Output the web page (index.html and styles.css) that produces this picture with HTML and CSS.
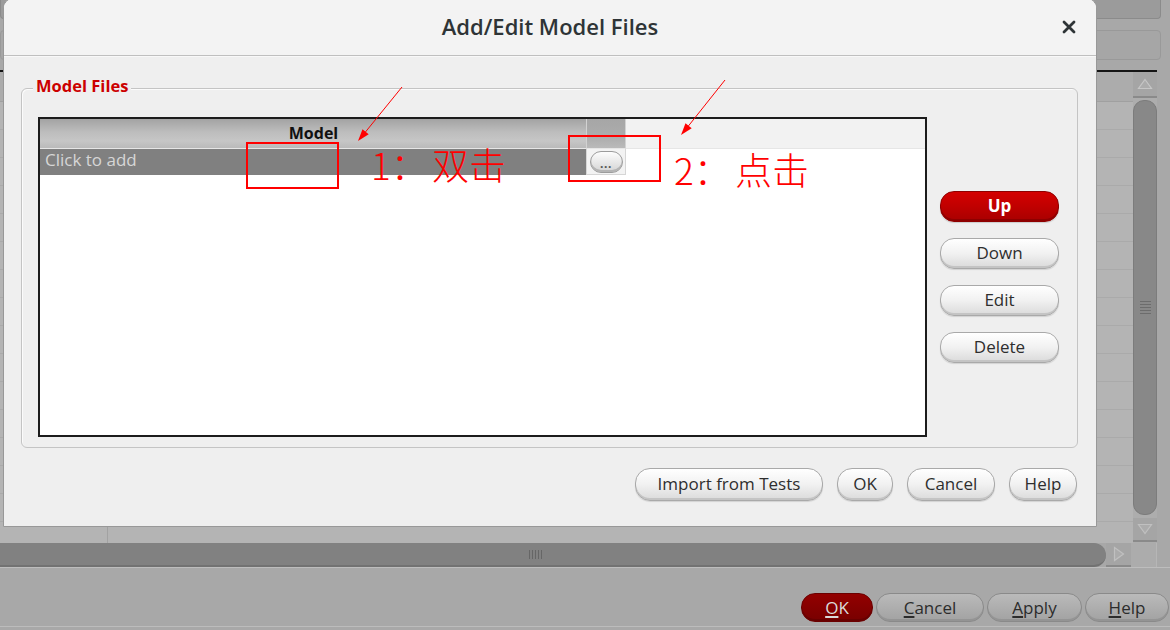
FILE: index.html
```html
<!DOCTYPE html>
<html lang="zh-CN">
<head>
<meta charset="utf-8">
<title>Add/Edit Model Files</title>
<link rel="stylesheet" href="styles.css">
</head>
<body>
<div class="app">
  <div class="app-top">
    <div class="tool-box tool-box-a"></div>
    <div class="tool-box tool-box-b"></div>
  </div>
  <div class="app-body">
    <div class="pane">
      <div class="pane-row pane-head"><div class="pane-cell first"></div><div class="pane-cell"></div></div>
      <div class="pane-row"><div class="pane-cell first"></div><div class="pane-cell"></div></div>
      <div class="pane-row"><div class="pane-cell first"></div><div class="pane-cell"></div></div>
      <div class="pane-row"><div class="pane-cell first"></div><div class="pane-cell"></div></div>
      <div class="pane-row"><div class="pane-cell first"></div><div class="pane-cell"></div></div>
      <div class="pane-row"><div class="pane-cell first"></div><div class="pane-cell"></div></div>
      <div class="pane-row"><div class="pane-cell first"></div><div class="pane-cell"></div></div>
      <div class="pane-row"><div class="pane-cell first"></div><div class="pane-cell"></div></div>
      <div class="pane-row"><div class="pane-cell first"></div><div class="pane-cell"></div></div>
      <div class="pane-row"><div class="pane-cell first"></div><div class="pane-cell"></div></div>
      <div class="pane-row"><div class="pane-cell first"></div><div class="pane-cell"></div></div>
      <div class="pane-row"><div class="pane-cell first"></div><div class="pane-cell"></div></div>
      <div class="pane-row"><div class="pane-cell first"></div><div class="pane-cell"></div></div>
      <div class="pane-row"><div class="pane-cell first"></div><div class="pane-cell"></div></div>
      <div class="pane-row"><div class="pane-cell first"></div><div class="pane-cell"></div></div>
      <div class="pane-row"><div class="pane-cell first"></div><div class="pane-cell"></div></div>
      <div class="pane-row"><div class="pane-cell first"></div><div class="pane-cell"></div></div>
    </div>
    <div class="vscroll">
      <div class="sb-btn sb-up">
        <svg width="16" height="12" viewBox="0 0 16 12"><polygon points="8,1.5 14.5,10.5 1.5,10.5" fill="#acacac" stroke="#c6c6c6" stroke-width="1.2"/></svg>
      </div>
      <div class="sb-track">
        <div class="vthumb"><span class="grip-v"></span></div>
      </div>
      <div class="sb-btn sb-down">
        <svg width="16" height="12" viewBox="0 0 16 12"><polygon points="1.5,1.5 14.5,1.5 8,10.5" fill="#acacac" stroke="#c0c0c0" stroke-width="1.2"/></svg>
      </div>
    </div>
    <div class="edge"></div>
  </div>
  <div class="hscroll-row">
    <div class="hthumb"><span class="grip-h"></span></div>
    <div class="sb-btn sb-right">
      <svg width="12" height="16" viewBox="0 0 12 16"><polygon points="1.5,1.5 10.5,8 1.5,14.5" fill="#acacac" stroke="#c0c0c0" stroke-width="1.2"/></svg>
    </div>
    <div class="corner"></div>
    <div class="edge"></div>
  </div>
  <div class="app-footer">
    <button class="fbtn fbtn-primary fbtn-ok"><u>O</u>K</button>
    <button class="fbtn fbtn-cancel"><u>C</u>ancel</button>
    <button class="fbtn fbtn-apply"><u>A</u>pply</button>
    <button class="fbtn fbtn-help"><u>H</u>elp</button>
  </div>
</div>

<div class="dialog">
  <div class="dlg-title">
    <span></span>
    <span class="dlg-title-text">Add/Edit Model Files</span>
    <span class="dlg-close">
      <svg width="14" height="14" viewBox="0 0 14 14"><path d="M2 2 L12 12 M12 2 L2 12" stroke="#2e3436" stroke-width="2.8" stroke-linecap="round"/></svg>
    </span>
  </div>
  <div class="dlg-body">
    <div class="group">
      <span class="group-legend">Model Files</span>
      <div class="mtable">
        <div class="mt-head mt-head-main">Model</div>
        <div class="mt-head mt-head-small"></div>
        <div class="mt-head mt-head-rest"></div>
        <div class="mt-cell mt-cell-main">Click to add</div>
        <div class="mt-cell mt-cell-small"><span class="ell-btn">...</span></div>
        <div class="mt-cell mt-cell-rest"></div>
        <div class="mt-fill"></div>
      </div>
      <div class="side-btns">
        <button class="pbtn pbtn-red">Up</button>
        <button class="pbtn">Down</button>
        <button class="pbtn">Edit</button>
        <button class="pbtn">Delete</button>
      </div>
    </div>
    <div class="dlg-footer">
      <button class="pbtn dbtn dbtn-import">Import from Tests</button>
      <button class="pbtn dbtn dbtn-ok">OK</button>
      <button class="pbtn dbtn dbtn-cancel">Cancel</button>
      <button class="pbtn dbtn dbtn-help">Help</button>
    </div>
  </div>
</div>

<svg class="annot-svg" width="1170" height="630" viewBox="0 0 1170 630">
  <g fill="none" stroke="#ff0000" stroke-width="2">
    <rect x="247" y="143" width="91" height="45"/>
    <rect x="569" y="136" width="91" height="45"/>
  </g>
  <g stroke="#ff0000" stroke-width="1">
    <line x1="402" y1="87" x2="363" y2="135"/>
    <line x1="725" y1="80" x2="686" y2="129"/>
  </g>
  <g fill="#ff0000">
    <polygon points="358,141 368.7,134.2 362.5,129.2"/>
    <polygon points="681,135 691.7,128.2 685.5,123.2"/>
  </g>
</svg>
<span class="annot-text annot-1">1： 双击</span>
<span class="annot-text annot-2">2： 点击</span>
</body>
</html>
```

FILE: styles.css
```css
* { box-sizing: border-box; }

html, body { margin: 0; padding: 0; }

body {
  width: 1170px;
  height: 630px;
  overflow: hidden;
  position: relative;
  background: #a8a8a8;
  font-family: "Open Sans", "Noto Sans", "Liberation Sans", sans-serif;
}

button { font-family: inherit; cursor: default; }

/* ---------- background application ---------- */
.app {
  width: 1170px;
  height: 630px;
  display: flex;
  flex-direction: column;
}

.app-top {
  height: 70px;
  display: flex;
  flex-direction: column;
  padding-right: 9px;
}

.tool-box { width: 100%; }

.tool-box-a {
  height: 19px;
  background: #9b9b9b;
  border: 1px solid #8b8b8b;
  border-top: none;
  border-radius: 0 0 4px 4px;
}

.tool-box-b {
  margin-top: 11px;
  height: 30px;
  background: #a6a6a6;
  border: 1px solid #999;
  border-radius: 4px;
}

.app-body {
  height: 473px;
  display: flex;
}

.pane {
  flex: 1;
  border-top: 2px solid #151515;
  background: #b4b4b4;
  display: flex;
  flex-direction: column;
  overflow: hidden;
}

.pane-row {
  flex: none;
  height: 28px;
  display: flex;
  border-bottom: 1px solid #aaaaaa;
}

.pane-head {
  height: 30px;
  background: #acacac;
  border-bottom: 1px solid #a0a0a0;
}

.pane-cell { flex: 1; }
.pane-cell.first { flex: none; width: 108px; border-right: 1px solid #a2a2a2; }

.vscroll {
  width: 24px;
  border-top: 2px solid #151515;
  background: #adadad;
  display: flex;
  flex-direction: column;
}

.sb-btn {
  display: flex;
  align-items: center;
  justify-content: center;
  background: #a5a5a5;
}

.sb-up { height: 26px; border-bottom: 2px solid #8a8a8a; }
.sb-down { height: 24px; border-bottom: 2px solid #8a8a8a; margin-bottom: 1px; }

.sb-track {
  flex: 1;
  display: flex;
  padding: 2px 0 3px;
}

.vthumb {
  flex: 1;
  background: #888888;
  border: 1px solid #7c7c7c;
  border-radius: 11px;
  display: flex;
  align-items: center;
  justify-content: center;
}

.grip-v {
  width: 11px;
  height: 13px;
  background: repeating-linear-gradient(to bottom, #6c6c6c 0 1px, transparent 1px 3px);
}

.edge { width: 13px; }

.hscroll-row {
  height: 24px;
  display: flex;
}

.hthumb {
  flex: 1;
  background: #818181;
  border-bottom: 2px solid #727272;
  border-radius: 0 12px 12px 0;
  display: flex;
  align-items: center;
  padding-left: 529px;
}

.grip-h {
  width: 13px;
  height: 9px;
  background: repeating-linear-gradient(to right, #666 0 1px, transparent 1px 3px);
}

.sb-right { width: 25px; border-bottom: 2px solid #8a8a8a; }

.corner {
  width: 26px;
  background: #acacac;
  border-right: 1px solid #b6b6b6;
}

.app-footer {
  flex: 1;
  border-top: 1px solid #bdbdbd;
  border-bottom: 1px solid #bcbcbc;
  margin-bottom: 3px;
  display: flex;
  justify-content: flex-end;
  align-items: flex-start;
  padding: 25px 1px 0 0;
  gap: 3px;
}

.fbtn {
  height: 29px;
  border-radius: 14px;
  border: 1px solid #8a8a8a;
  background: linear-gradient(to bottom, #bababa, #a2a2a2);
  color: #2c2c2c;
  font-size: 17px;
  padding: 0;
  box-shadow: inset 0 -2px 0 #949494;
}

.fbtn u { text-decoration-thickness: 2px; text-underline-offset: 2px; }

.fbtn-primary {
  background: linear-gradient(to bottom, #930000, #780000);
  border-color: #6b0000;
  color: #dadada;
  box-shadow: inset 0 -2px 0 #680000;
}

.fbtn-ok { width: 72px; }
.fbtn-cancel { width: 108px; }
.fbtn-apply { width: 95px; }
.fbtn-help { width: 84px; }

/* ---------- dialog ---------- */
.dialog {
  position: absolute;
  left: 3px;
  top: -2px;
  width: 1094px;
  height: 529px;
  background: #efefef;
  border: 1px solid #989898;
  border-radius: 10px 10px 0 0;
  display: flex;
  flex-direction: column;
}

.dlg-title {
  height: 57px;
  flex: none;
  background: #f3f3f3;
  border-radius: 9px 9px 0 0;
  border-bottom: 1px solid #bfbfbf;
  box-shadow: 0 1px 0 #f8f8f8;
  display: grid;
  grid-template-columns: 1fr auto 1fr;
  align-items: center;
}

.dlg-title-text {
  font-size: 22px;
  font-weight: 600;
  color: #2e3436;
  margin-top: -3px;
}

.dlg-close {
  justify-self: end;
  padding-right: 20px;
  display: flex;
  margin-top: 0;
}

.dlg-body {
  padding: 32px 18px 0 17px;
  display: flex;
  flex-direction: column;
}

.group {
  position: relative;
  border: 1px solid #c4c4c4;
  border-radius: 6px;
  box-shadow: inset 1px 1px 0 #fbfbfb;
  padding: 28px 17px 10px 16px;
  display: flex;
  gap: 13px;
}

.group-legend {
  position: absolute;
  top: -14px;
  left: 11px;
  padding: 0 3px;
  background: #efefef;
  color: #cc0000;
  font-size: 16.5px;
  font-weight: 700;
  line-height: 22px;
}

.mtable {
  width: 889px;
  height: 320px;
  border: 2px solid #1c1c1c;
  background: #ffffff;
  display: grid;
  grid-template-columns: 546px 40px 1fr;
  grid-template-rows: 30px 26px 1fr;
}

.mt-head {
  border-bottom: 1px solid #e6e6e6;
}

.mt-head-main {
  background: linear-gradient(to bottom, #a3a3a3 0%, #bdbdbd 45%, #c6c6c6 75%, #bababa 100%);
  text-align: center;
  font-size: 16px;
  font-weight: 700;
  color: #111;
  line-height: 29px;
  padding-left: 1px;
}

.mt-head-small {
  background: linear-gradient(to bottom, #a6a6a6 0%, #acacac 60%, #bababa 100%);
  border-left: 1px solid #d2d2d2;
  border-right: 1px solid #d2d2d2;
}

.mt-head-rest { background: #f2f2f2; }

.mt-cell-main {
  background: #808080;
  color: #d6d6d6;
  font-size: 17px;
  line-height: 22px;
  padding-left: 5px;
}

.mt-cell-small {
  background: #f3f3f3;
  border-left: 1px solid #d6d6d6;
  border-right: 1px solid #d6d6d6;
  border-bottom: 1px solid #d6d6d6;
  display: flex;
  align-items: center;
  justify-content: center;
}

.ell-btn {
  width: 33px;
  height: 22px;
  border-radius: 11px;
  border: 1px solid #9c9c9c;
  background: linear-gradient(to bottom, #fdfdfd, #d4d4d4);
  box-shadow: inset 0 -2px 0 #b4b4b4;
  font-size: 12px;
  font-weight: 700;
  color: #555;
  display: flex;
  align-items: flex-end;
  justify-content: center;
  line-height: 16px;
  letter-spacing: 0.5px;
}

.mt-fill { grid-column: 1 / 4; }

.side-btns {
  width: 119px;
  padding-top: 74px;
  display: flex;
  flex-direction: column;
  gap: 16px;
}

.pbtn {
  height: 31px;
  border-radius: 14px;
  border: 1px solid #a9a9a9;
  background: linear-gradient(to bottom, #ffffff 0%, #f1f1f1 50%, #dadada 100%);
  box-shadow: inset 0 -2px 0 #c4c4c4, 0 1px 1px rgba(0,0,0,0.12);
  font-size: 17px;
  color: #2e2e2e;
  padding: 0 0 2px;
}

.pbtn-red {
  background: linear-gradient(to bottom, #d40000 0%, #c00000 50%, #a80000 100%);
  border-color: #8f0000;
  box-shadow: inset 0 -2px 0 #8e0000, 0 1px 1px rgba(0,0,0,0.15);
  color: #ffffff;
  font-weight: 700;
}

.dlg-footer {
  margin-top: 20px;
  padding-right: 1px;
  display: flex;
  justify-content: flex-end;
  gap: 14px;
}

.dbtn { height: 33px; border-radius: 15px; }
.dbtn-import { width: 188px; }
.dbtn-ok { width: 56px; }
.dbtn-cancel { width: 88px; }
.dbtn-help { width: 68px; }

/* ---------- annotations ---------- */
.annot-svg {
  position: absolute;
  left: 0;
  top: 0;
  pointer-events: none;
}

.annot-text {
  position: absolute;
  font-family: "Noto Sans CJK SC", "Noto Sans", sans-serif;
  font-weight: 300;
  font-size: 37px;
  line-height: 37px;
  color: #ff0000;
  white-space: pre;
  word-spacing: -4px;
}

.annot-1 { left: 371px; top: 146px; }
.annot-2 { left: 674px; top: 151px; }
```
